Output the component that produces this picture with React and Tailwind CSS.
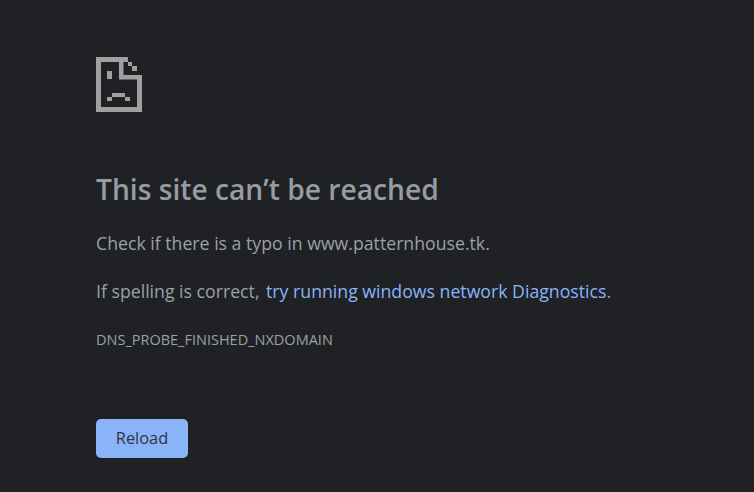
const SadFile = () => (
    <svg width="46" height="55" viewBox="0 0 46 55" fill="#a0a0a0" className="block">
        {/* outline */}
        <rect x="0" y="0" width="32" height="5" />
        <rect x="0" y="0" width="5" height="55" />
        <rect x="0" y="50" width="46" height="5" />
        <rect x="41" y="18" width="5" height="37" />
        {/* folded corner */}
        <rect x="23" y="0" width="4.5" height="22" />
        <rect x="23" y="18" width="23" height="4.5" />
        <rect x="32" y="5" width="4" height="4" />
        <rect x="36" y="9" width="5" height="5" />
        {/* eye and mouth */}
        <rect x="11" y="14" width="5" height="8" />
        <rect x="16" y="36" width="13" height="4" />
        <rect x="11" y="40" width="5" height="4" />
        <rect x="29" y="40" width="5" height="4" />
    </svg>
);

const App = () => {
    return (
        <div className="w-[754px] h-[492px] overflow-hidden bg-[#202124] pl-[96px] pt-[57px] font-['Open_Sans','Noto_Sans',sans-serif]">
            <SadFile />

            <h1 className="mt-[59px] text-[28.2px] leading-[36px] font-semibold text-[#969ca2]">
                This site can’t be reached
            </h1>

            <p className="mt-[23px] text-[17.7px] leading-[26px] text-[#9aa0a6]">
                Check if there is a typo in www.patternhouse.tk.
            </p>

            <p className="mt-[22px] text-[17.7px] leading-[26px] text-[#9aa0a6]">
                If spelling is correct, <span className="ml-[2px] text-[#8ab4f8]">try running windows network Diagnostics</span>.
            </p>

            <div className="mt-[27px] text-[14.5px] leading-[18px] text-[#9aa0a6]">
                DNS_PROBE_FINISHED_NXDOMAIN
            </div>

            <button className="mt-[70px] block w-[92px] h-[39px] rounded-[5px] bg-[#8ab4f8] text-[16.4px] text-[#2f3540]">
                Reload
            </button>
        </div>
    );
};

export default App;
